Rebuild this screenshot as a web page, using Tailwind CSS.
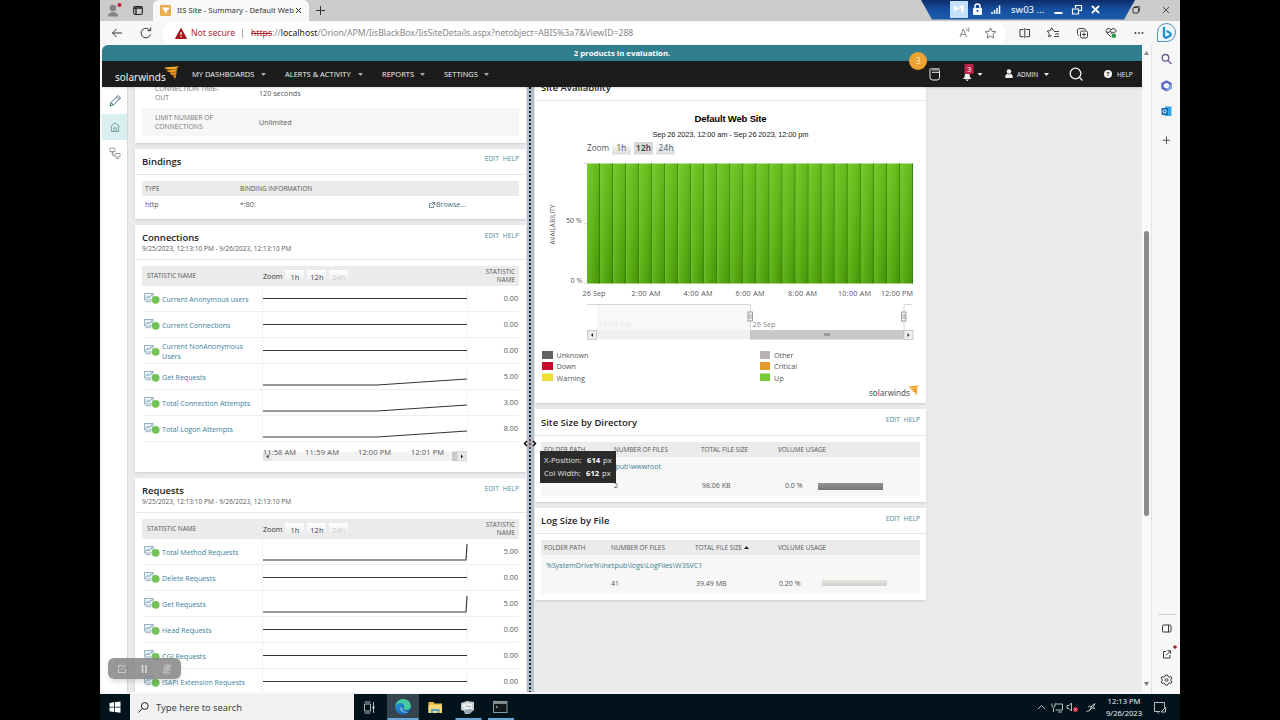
<!DOCTYPE html>
<html lang="en">
<head>
  <meta charset="UTF-8" />
  <meta name="viewport" content="width=device-width, initial-scale=1.0" />
  <title>IIS Site - Summary - Default Web Site</title>
  <script src="https://cdn.jsdelivr.net/npm/@tailwindcss/browser@4"></script>
</head>
<body class="w-[1280px] h-[720px] bg-black overflow-hidden flex justify-center font-['Open_Sans',sans-serif] text-[7px] text-[#555]">

<!-- Shared symbols -->
<svg class="hidden">
  <symbol id="bird" viewBox="0 0 16 15">
    <path d="M0 2.200C4 .3 9 1.600 15.500 0c-.6 1.600-1.600 2.600-3 3.200C8.500 4.600 4.500 4 0 2.200z" fill="#f4a62a"/>
    <path d="M2 4.300c4 .8 8.500 0 12.500-1.600-.8 2.400-2.200 3.800-4 4.300-3 .7-6-.2-8.500-2.700z" fill="#f39a1e"/>
    <path d="M5.500 7.300c3 .6 6-.2 8.300-1.800-.5 3-1.400 4.200-3 4.500-1.600.3-3.500-.8-5.300-2.700z" fill="#ef8d17"/>
    <path d="M9.200 11c1.500-.2 2.800-1 3.800-2.500.2 2-.3 3.600-1.800 6 .3-1.700-.4-2.800-2-3.500z" fill="#ee8a14"/>
  </symbol>
  <symbol id="stat" viewBox="0 0 16 13">
    <rect x=".6" y="1.500" width="8.500" height="6.500" fill="#eef5f9" stroke="#8fabbf" stroke-width=".9"/>
    <path d="M1.500 6.500l2-2 1.500 1L8.500 2.300" fill="none" stroke="#4b89a4" stroke-width=".9"/>
    <path d="M1.500 9.700h5.500" stroke="#9cb0bd"/>
    <circle cx="11.700" cy="7.800" r="3.900" fill="#74c257"/>
  </symbol>
</svg>

<div class="relative w-[1080px] h-[720px] flex flex-col bg-[#f7f7f7]">

  <!-- Browser tabs -->
  <div class="h-[21px] shrink-0 bg-[#cbcbca] flex items-center font-['Noto_Sans',sans-serif] text-[#333]">
    <svg class="w-[53px] h-[21px] shrink-0" viewBox="0 0 53 21">
      <circle cx="13" cy="8" r="3.200" fill="#858585"/><path d="M8 16.500c0-6 10-6 10 0z" fill="#858585"/>
      <circle cx="19.500" cy="5" r="2" fill="#c3202f"/>
      <rect x="33.700" y="6.500" width="8.600" height="8" rx="1.500" fill="none" stroke="#222" stroke-width="1.100"/><path d="M33.700 8h8.600M36 8v6" stroke="#222" stroke-width="1.300"/>
    </svg>
    <div class="w-[156px] h-full bg-[#f8f8f8] rounded-t-md flex items-center">
      <svg class="ml-[7px] w-[11px] h-[11px] shrink-0" viewBox="0 0 11 11"><rect width="11" height="11" rx="1" fill="#e8ad4e"/><path d="M2 2.500h7.500C9 5 7.500 5.500 6.500 6v3C5 8 4.500 6 2 2.500z" fill="#fff"/></svg>
      <span class="ml-[6px] w-[112px] whitespace-nowrap text-[7.7px]">IIS Site - Summary - Default Web</span>
      <svg class="ml-[6px] w-[7px] h-[7px]" viewBox="0 0 7 7"><path d="M1 1l5 5M6 1L1 6" stroke="#222"/></svg>
    </div>
    <svg class="ml-[6px] w-[11px] h-[11px]" viewBox="0 0 11 11"><path d="M5.500 1v9M1 5.500h9" stroke="#333"/></svg>
    <svg class="ml-auto w-[56px] h-[21px]" viewBox="0 0 56 21"><rect x="9" y="7.500" width="5.500" height="5.500" rx="1" fill="none" stroke="#333"/><path d="M10.500 6.500h5v5" fill="none" stroke="#333" stroke-width=".7"/><path d="M39 7l6 6M45 7l-6 6" stroke="#444" stroke-width=".9"/></svg>
  </div>

  <!-- Remote session bar -->
  <div class="absolute top-0 left-[820px] w-[216px] h-[20px]">
    <svg class="absolute inset-0 w-[216px] h-[20px]" viewBox="0 0 216 20">
      <defs><linearGradient id="rdp" x2="0" y2="1"><stop stop-color="#0d2d68"/><stop offset=".5" stop-color="#1650a0"/><stop offset="1" stop-color="#1b5cad"/></linearGradient></defs>
      <path d="M1 0h214l-11 19.500H12z" fill="url(#rdp)"/>
      <rect x="30" y="1" width="18" height="17" fill="#c3e2fa"/><path d="M35 6v5M35 8.500h4M42.500 5.500v7M43 9l-3-3" stroke="#fff" stroke-width="2.200" fill="none"/>
      <rect x="53" y="8" width="9" height="7" rx="1" fill="#fff"/><path d="M55 8V6.500a2.500 2.500 0 015 0V8" fill="none" stroke="#fff" stroke-width="1.500"/><circle cx="57.500" cy="11" r="1" fill="#1650a0"/>
      <path d="M72 14v-2M74.500 14v-4M77 14V8M79.500 14V5.500" stroke="#fff" stroke-width="1.500"/>
      <path d="M134.500 13h8" stroke="#fff" stroke-width="2"/>
      <path d="M152.500 9h6v5h-6zM155.500 8V5.500h6v5h-2.500" fill="none" stroke="#fff" stroke-width="1.200"/>
      <path d="M172 6l7 7M179 6l-7 7" stroke="#fff" stroke-width="1.800"/>
    </svg>
    <span class="absolute left-[91px] top-[3px] text-[9.6px] leading-[14px] text-white font-['Noto_Sans',sans-serif]">sw03 ...</span>
  </div>

  <!-- Address bar -->
  <div class="h-[24px] shrink-0 flex items-center font-['Noto_Sans',sans-serif] text-[8.7px]">
    <svg class="w-[62px] h-[24px] shrink-0" viewBox="0 0 62 24"><path d="M22 12H12.500m4-4l-4 4 4 4" fill="none" stroke="#333"/><path d="M50 9.500a4.800 4.800 0 10.500 4M50.700 6.500v3.200h-3.200" fill="none" stroke="#333"/></svg>
    <div class="w-[844px] h-[22px] bg-white rounded-full flex items-center whitespace-nowrap">
      <svg class="ml-[13px] w-[12px] h-[11px]" viewBox="0 0 12 11"><path d="M6 .5l5.500 10H.5z" fill="#a8141c" stroke="#a8141c" stroke-linejoin="round"/><path d="M6 4v3M6 8v1.200" stroke="#fff" stroke-width="1.200"/></svg>
      <span class="ml-[4px] w-[45px] pt-px text-[#b5242c]">Not secure</span>
      <span class="ml-[6px] h-[9px] w-px bg-[#aaa]"></span>
      <span class="ml-[8px] pt-px text-[#888] text-[8.66px]"><span class="text-[#b5242c] line-through">https</span>://<span class="text-[#222]">localhost</span>/Orion/APM/IisBlackBox/IisSiteDetails.aspx?netobject=ABIS%3a7&amp;ViewID=288</span>
      <svg class="ml-auto mr-[7px] w-[42px] h-[22px]" viewBox="0 0 42 22"><path d="M3 15l3.300-8 3.300 8M4.200 12.500h4.200M9.500 6.500q1.200 1.200 0 2.600M11.200 5.500q2 2.200 0 4.400" fill="none" stroke="#777" stroke-width=".9"/><path d="M33.500 6l1.600 3.400 3.700.4-2.800 2.500.8 3.700-3.300-1.900-3.300 1.900.8-3.700-2.800-2.500 3.700-.4z" fill="none" stroke="#666" stroke-width=".9"/></svg>
    </div>
    <svg class="w-[146px] h-[24px] shrink-0" viewBox="1006 21 146 24">
      <g fill="none" stroke="#333" stroke-width=".95">
        <path d="M1023.500 29.500h-3.500v7.200h3.500M1026 29.500h3.500v7.200h-3.500M1024.800 28v10.200"/>
        <path d="M1054 31.500h5M1055 34h4M1054 36.500h5M1053.500 31l-1.800-3.300-1.500 3-3.200.5 2.300 2.200-.6 3.400 3-1.500"/>
        <rect x="1080.500" y="31" width="7" height="7" rx="1.500"/><path d="M1084 32.500v4M1082 34.500h4M1079 35.500q-1.500-.5-1.500-2v-3q0-2 2-2h4q1.500 0 2 1.500"/>
        <path d="M1111 36.800l-4.300-4q-1.500-2.500.5-4 2-1 3.800 1 1.800-2 3.800-1 2 1.500.8 3.500M1107 32.300h2.400l1-1.700 1.500 3 1-1.300h2"/>
      </g>
      <circle cx="1113.800" cy="35.800" r="2.300" fill="#2d9a41"/>
      <circle cx="1135.500" cy="33" r=".9" fill="#333"/><circle cx="1139" cy="33" r=".9" fill="#333"/><circle cx="1142.500" cy="33" r=".9" fill="#333"/>
    </svg>
  </div>

  <div class="flex h-[649px] shrink-0 pl-[2px]">
    <!-- Orion page -->
    <div class="w-[1040px] h-[647px] flex flex-col rounded-tl-md overflow-hidden bg-[#ebebed]">
      <div class="h-[16px] shrink-0 pt-px bg-[#307e90] text-white font-bold text-[7.8px] flex items-center justify-center">2 products in evaluation.</div>

      <nav class="h-[26px] shrink-0 bg-[#1c1c1c] text-[#f3f3f3] text-[7.5px] flex items-center whitespace-nowrap relative shadow">
        <span class="ml-[13px] w-[50px] pt-[5px] text-[10px] leading-none font-['Noto_Sans',sans-serif]">solarwinds</span>
        <svg class="w-[15px] h-[14px] mb-[3px] -ml-px"><use href="#bird"/></svg>
        <span class="ml-[13px] pt-px w-[65px]">MY DASHBOARDS</span><svg class="ml-[4px] w-[5px] h-[3px]" viewBox="0 0 5 3"><path d="M0 0h5L2.500 3z" fill="#aaa"/></svg>
        <span class="ml-[19px] pt-px w-[69px]">ALERTS &amp; ACTIVITY</span><svg class="ml-[4px] w-[5px] h-[3px]" viewBox="0 0 5 3"><path d="M0 0h5L2.500 3z" fill="#aaa"/></svg>
        <span class="ml-[19px] pt-px w-[34px]">REPORTS</span><svg class="ml-[4px] w-[5px] h-[3px]" viewBox="0 0 5 3"><path d="M0 0h5L2.500 3z" fill="#aaa"/></svg>
        <span class="ml-[19px] pt-px w-[36px]">SETTINGS</span><svg class="ml-[4px] w-[5px] h-[3px]" viewBox="0 0 5 3"><path d="M0 0h5L2.500 3z" fill="#aaa"/></svg>
        <svg class="ml-auto w-[92px] h-[26px] shrink-0" viewBox="924 61 92 26">
          <path d="M930 68.500v9q0 2.500 2.500 2.500h4.500q2.500 0 2.500-2.500v-7" fill="none" stroke="#eee"/><path d="M930.500 68h8.500q.8 0 .8 1v1.500h-8z" fill="#999"/><path d="M932 72.300h8" stroke="#eee"/>
          <path d="M963 79q2-1.500 2-5h4.500q0 3.500 2 5zM965.500 79.500h3.500l-1.700 1.800z" fill="#eee"/><rect x="964.500" y="64" width="9" height="10" rx="1" fill="#bf2547"/>
          <text x="967" y="72" font-size="7.500" fill="#fff">3</text>
          <path d="M977.500 73h5l-2.500 3z" fill="#eee"/>
          <circle cx="1009" cy="71.500" r="2.300" fill="#eee"/><path d="M1005.300 78v-2q1-2.200 2.500-2.200l1.200 1 1.200-1q1.700 0 2.500 2.200v2z" fill="#eee"/>
        </svg>
        <span class="ml-px pt-px w-[23px] text-[6.4px]">ADMIN</span><svg class="ml-[4px] w-[5px] h-[3px]" viewBox="0 0 5 3"><path d="M0 0h5L2.500 3z" fill="#eee"/></svg>
        <svg class="ml-[20px] w-[14px] h-[14px]" viewBox="0 0 14 14"><circle cx="6.500" cy="6.500" r="5.300" fill="none" stroke="#f2f2f2" stroke-width="1.300"/><path d="M10.500 10.500l3 3" stroke="#f2f2f2" stroke-width="1.300"/></svg>
        <svg class="ml-[21px] w-[8px] h-[8px]" viewBox="0 0 8 8"><circle cx="4" cy="4" r="4" fill="#f2f2f2"/><text x="2.400" y="6.300" font-size="6" font-weight="bold" fill="#222">?</text></svg>
        <span class="ml-[5px] pt-px w-[25px] text-[6.5px]">HELP</span>
      </nav>

      <div class="flex h-[605px] overflow-hidden">
        <!-- Icon rail -->
        <div class="w-[26px] shrink-0 bg-white border-r border-[#d8d8d8] flex flex-col">
          <div class="h-[27px] flex items-center justify-center"><svg class="w-[14px] h-[14px]" viewBox="0 0 14 14" fill="none" stroke="#3f7080"><path d="M2 12l1-3.500L10 1.500l2.500 2.500-7 7zM8.500 3L11 5.500M3 8.500L5.500 11"/></svg></div>
          <div class="h-[26px] bg-[#d9eff0] flex items-center justify-center"><svg class="w-[10px] h-[10px]" viewBox="0 0 10 10" fill="none" stroke="#71959c" stroke-width=".9"><path d="M.5 4.700L5 1l4.500 3.700M1.500 4.500v5h7v-5M3.800 9.500V5.800h2.400v3.700"/></svg></div>
          <div class="h-[26px] flex items-center justify-center"><svg class="w-[12px] h-[12px]" viewBox="0 0 12 12" fill="none" stroke="#999" stroke-width=".9"><path d="M1 1h5v3.500H1zM6 6.500h5V10H6zM3.500 4.500v4H6M2 6h3M7 11.500h3"/></svg></div>
        </div>

        <!-- Left column -->
        <div class="w-[391px] ml-[7px] shrink-0 flex flex-col gap-[6px]">
          <div class="h-[56px] shrink-0 bg-white shadow px-[7px] text-[7.2px] leading-[9px] text-[#777]">
            <div class="-mt-[2px] h-[23px] flex items-start pl-[13px]"><div class="w-[104px] -mt-[1px] text-[6.8px]">CONNECTION TIME-<br>OUT</div><div class="pt-[4px] text-[#555]">120 seconds</div></div>
            <div class="h-[28px] bg-[#f6f6f6] flex items-center pl-[13px]"><div class="w-[104px] text-[6.8px]">LIMIT NUMBER OF<br>CONNECTIONS</div><div class="text-[#555]">Unlimited</div></div>
          </div>

          <div class="h-[70px] shrink-0 bg-white shadow">
            <div class="h-[26px] border-b border-[#e6e6e6] flex px-[7px]"><h2 class="pt-[6px] text-[9.5px] leading-[14px] font-semibold text-[#222]">Bindings</h2><div class="ml-auto pt-[5px] flex gap-[4px] text-[6.7px] leading-[10px] text-[#4d8a9c]"><span>EDIT</span><span>HELP</span></div></div>
            <div class="mx-[7px] mt-[6px] h-[15px] bg-[#ebebeb] flex items-center pl-[3px] text-[6.4px]"><span class="w-[95px]">TYPE</span><span>BINDING INFORMATION</span></div>
            <div class="mx-[7px] h-[17px] pt-px flex items-center pl-[3px]"><span class="w-[95px]">http</span><span class="w-[189px]">*:80:</span>
              <svg class="w-[6px] h-[6px] mr-px" viewBox="0 0 6 6" fill="none" stroke="#4d7483" stroke-width=".8"><path d="M2.500 1.500h-2v4h4v-2M3 .5h2.500V3M5.500.5L2.500 3.500"/></svg><span class="text-[#446a78]">Browse...</span></div>
          </div>

          <div class="h-[247px] shrink-0 bg-white shadow">
            <div class="h-[35px] border-b border-[#e6e6e6] flex px-[7px]"><div><h2 class="pt-[7px] text-[9.5px] leading-[12px] font-semibold text-[#222]">Connections</h2><p class="text-[6.55px] leading-[9px]">9/25/2023, 12:13:10 PM - 9/26/2023, 12:13:10 PM</p></div><div class="ml-auto pt-[6px] flex gap-[4px] text-[6.7px] leading-[10px] text-[#4d8a9c]"><span>EDIT</span><span>HELP</span></div></div>
            <div class="mx-[7px] mt-[6px] h-[20px] bg-[#ebebeb] flex items-center pl-[5px] text-[6.4px]">
              <span class="w-[116px]">STATISTIC NAME</span><span class="text-[7.2px] text-[#333]">Zoom</span>
              <div class="ml-[3px] flex gap-[3px] text-[7.5px] text-[#444]"><span class="w-[19px] h-[13px] text-center leading-[14px] bg-linear-to-b from-white to-[#e9e9e9]">1h</span><span class="w-[19px] h-[13px] text-center leading-[14px] bg-linear-to-b from-white to-[#e9e9e9]">12h</span><span class="w-[19px] h-[13px] text-center leading-[14px] bg-linear-to-b from-white to-[#e9e9e9] text-[#ccc]">24h</span></div>
              <span class="ml-auto mr-[4px] text-right leading-[8px]">STATISTIC<br>NAME</span>
            </div>
            <div id="connections" class="mx-[7px]"></div>
            <svg class="ml-[127px] mt-[6px] w-[206px] h-[14px]" viewBox="262 448 206 14">
              <rect x="263" y="451.500" width="203" height="9.500" fill="#f3f3f3"/>
              <rect x="263" y="451.500" width="9" height="9.500" fill="#e4e4e4"/><path d="M268.500 454.500v4l-2-2z" fill="#222"/>
              <rect x="452" y="451.500" width="5" height="9.500" fill="#c9c9c9"/><rect x="457" y="451.500" width="9.500" height="9.500" fill="#e4e4e4" stroke="#ccc" stroke-width=".5"/><path d="M461 454.500v4l2-2z" fill="#222"/>
              <g font-size="7.500" fill="#555"><text x="263" y="455" textLength="33">11:58 AM</text><text x="305" y="455" textLength="34">11:59 AM</text><text x="358" y="455" textLength="33">12:00 PM</text><text x="411" y="455" textLength="33">12:01 PM</text></g>
            </svg>
          </div>

          <div class="h-[247px] shrink-0 bg-white shadow">
            <div class="h-[35px] border-b border-[#e6e6e6] flex px-[7px]"><div><h2 class="pt-[7px] text-[9.5px] leading-[12px] font-semibold text-[#222]">Requests</h2><p class="text-[6.55px] leading-[9px]">9/25/2023, 12:13:10 PM - 9/26/2023, 12:13:10 PM</p></div><div class="ml-auto pt-[6px] flex gap-[4px] text-[6.7px] leading-[10px] text-[#4d8a9c]"><span>EDIT</span><span>HELP</span></div></div>
            <div class="mx-[7px] mt-[6px] h-[20px] bg-[#ebebeb] flex items-center pl-[5px] text-[6.4px]">
              <span class="w-[116px]">STATISTIC NAME</span><span class="text-[7.2px] text-[#333]">Zoom</span>
              <div class="ml-[3px] flex gap-[3px] text-[7.5px] text-[#444]"><span class="w-[19px] h-[13px] text-center leading-[14px] bg-linear-to-b from-white to-[#e9e9e9]">1h</span><span class="w-[19px] h-[13px] text-center leading-[14px] bg-linear-to-b from-white to-[#e9e9e9]">12h</span><span class="w-[19px] h-[13px] text-center leading-[14px] bg-linear-to-b from-white to-[#e9e9e9] text-[#ccc]">24h</span></div>
              <span class="ml-auto mr-[4px] text-right leading-[8px]">STATISTIC<br>NAME</span>
            </div>
            <div id="requests" class="mx-[7px]"></div>
          </div>
        </div>

        <!-- Column resizer -->
        <div class="w-[7px] ml-px mr-px shrink-0 bg-[#b4c1cb] flex justify-center"><div class="w-[2px] h-full mr-px bg-[repeating-linear-gradient(#17222e_0_2.5px,#b4c1cb_2.5px_4px)]"></div></div>

        <!-- Right column -->
        <div class="w-[391px] shrink-0 flex flex-col gap-[6px]">
          <div class="h-[316px] shrink-0 bg-white shadow overflow-hidden">
            <div class="h-[14px] border-b border-[#e6e6e6] pl-[6px] flex items-start"><h2 class="-mt-[6px] text-[9.5px] leading-[14px] font-semibold text-[#222]">Site Availability</h2></div>
            <svg class="w-[391px] h-[302px]" viewBox="535 101 391 302">
              <defs><linearGradient id="up" x2="1" y2="1"><stop stop-color="#76cb2c"/><stop offset=".5" stop-color="#60b51a"/><stop offset="1" stop-color="#459006"/></linearGradient>
              <linearGradient id="btn" x2="0" y2="1"><stop stop-color="#fff"/><stop offset="1" stop-color="#dcdcdc"/></linearGradient></defs>
              <g font-family="Liberation Sans" fill="#000"><text x="694.500" y="121.500" font-size="9.500" font-weight="bold" textLength="72">Default Web Site</text><text x="652.500" y="137" font-size="7.500" fill="#222" textLength="156">Sep 26 2023, 12:00 am - Sep 26 2023, 12:00 pm</text></g>
              <rect x="612" y="142" width="19" height="12.500" fill="url(#btn)"/><rect x="634" y="142" width="19" height="12.500" fill="#d8d8d8"/><rect x="656" y="142" width="19" height="12.500" fill="url(#btn)"/>
              <g font-size="8.200" fill="#555"><text x="587" y="151" textLength="22">Zoom</text><text x="616.500" y="151">1h</text><text x="636" y="151" font-weight="600" fill="#333" textLength="15">12h</text><text x="658.500" y="151" fill="#3d5c70" textLength="15">24h</text></g>
              <path d="M584 163.500h4M584 223.500h4M584 283.500h4" stroke="#ccc" stroke-width=".7"/>
              <g id="bars"></g>
              <g font-size="7.200" fill="#555">
                <text transform="translate(555 244.500) rotate(-90)" font-size="6.500" textLength="40">AVAILABILITY</text>
                <text x="566" y="222.500" textLength="16">50 %</text><text x="570.500" y="282.500" textLength="12">0 %</text>
                <text x="582.500" y="295.500" textLength="23">26 Sep</text><text x="631.500" y="295.500" textLength="29">2:00 AM</text><text x="683.500" y="295.500" textLength="29">4:00 AM</text><text x="735.500" y="295.500" textLength="29">6:00 AM</text><text x="788" y="295.500" textLength="29">8:00 AM</text><text x="838" y="295.500" textLength="33">10:00 AM</text><text x="881" y="295.500" textLength="32">12:00 PM</text>
              </g>
              <path d="M587 304.500h163.500v26M904 330v-25.500h8" fill="none" stroke="#ccc" stroke-width=".8"/><rect x="597" y="305" width="153" height="25" fill="#f8f8f8"/>
              <text x="599" y="327" font-size="7" fill="#e8e8e8" textLength="32">12:00 AM</text><text x="752.500" y="327" font-size="7.200" fill="#888" textLength="23">26 Sep</text>
              <rect x="587" y="330" width="326" height="9.500" fill="#f0f0f0"/><rect x="750" y="330" width="154" height="9.500" fill="#c8c8c8"/>
              <path d="M825 333v3M827 333v3M829 333v3" stroke="#666" stroke-width=".9"/>
              <g fill="#eee" stroke="#bbb" stroke-width=".7"><rect x="587.400" y="330.400" width="9" height="9"/><rect x="904" y="330.400" width="9" height="9"/></g>
              <path d="M593 333v4l-2-2zM907.500 333v4l2-2z" fill="#222"/>
              <g fill="#f5f5f5" stroke="#888" stroke-width=".8"><rect x="748" y="312" width="4.500" height="9"/><rect x="901.500" y="312" width="4.500" height="9"/></g><path d="M749.600 314v5M751 314v5M903.200 314v5M904.600 314v5" stroke="#888" stroke-width=".6"/>
              <rect x="542" y="351" width="11" height="8" fill="#606264"/><rect x="542" y="362" width="11" height="8" fill="#c8092f"/><rect x="542" y="373.500" width="11" height="7.500" fill="#f0df30"/>
              <rect x="760" y="351" width="10" height="8" fill="#b7b3b5"/><rect x="760" y="362" width="10" height="8" fill="#e59a2b"/><rect x="760" y="373.500" width="10" height="7.500" fill="#77c935"/>
              <g font-size="7.200" fill="#555"><text x="556.500" y="358" textLength="32">Unknown</text><text x="556.500" y="369" textLength="19.500">Down</text><text x="556.500" y="380.500" textLength="28.500">Warning</text><text x="774" y="358" textLength="19.500">Other</text><text x="774" y="369" textLength="23">Critical</text><text x="774" y="380.500" textLength="10">Up</text></g>
              <text x="869" y="396" font-size="8.200" fill="#555" font-family="Noto Sans" textLength="41">solarwinds</text><use href="#bird" x="908" y="385" width="11" height="11"/>
            </svg>
          </div>

          <div class="h-[93px] shrink-0 bg-white shadow">
            <div class="h-[27px] border-b border-[#e6e6e6] flex px-[6px]"><h2 class="pt-[7px] text-[9.5px] leading-[14px] font-semibold text-[#222]">Site Size by Directory</h2><div class="ml-auto pt-[6px] flex gap-[4px] text-[6.7px] leading-[10px] text-[#4d8a9c]"><span>EDIT</span><span>HELP</span></div></div>
            <div class="mx-[6px] mt-[6px] h-[15px] bg-[#ebebeb] flex items-center pl-[3px] text-[6.4px]"><span class="w-[70px]">FOLDER PATH</span><span class="w-[87px]">NUMBER OF FILES</span><span class="w-[77px]">TOTAL FILE SIZE</span><span>VOLUME USAGE</span></div>
            <div class="mx-[6px] h-[39px] bg-[#f7f7f7]">
              <div class="h-[20px] pl-[5px] flex items-center text-[#3b7f92]"><span class="w-[115px] whitespace-nowrap flex justify-end">%SystemDrive%\inetpub\wwwroot</span></div>
              <div class="h-[19px] pl-[73px] flex items-center"><span class="w-[88px]">2</span><span class="w-[83px]">98.06 KB</span><span class="w-[33px]">0.0 %</span><span class="w-[65px] h-[7px] bg-linear-to-b from-[#949494] to-[#777]"></span></div>
            </div>
          </div>

          <div class="h-[92px] shrink-0 bg-white shadow">
            <div class="h-[26px] border-b border-[#e6e6e6] flex px-[6px]"><h2 class="pt-[6px] text-[9.5px] leading-[14px] font-semibold text-[#222]">Log Size by File</h2><div class="ml-auto pt-[6px] flex gap-[4px] text-[6.7px] leading-[10px] text-[#4d8a9c]"><span>EDIT</span><span>HELP</span></div></div>
            <div class="mx-[6px] mt-[6px] h-[15px] bg-[#ebebeb] flex items-center pl-[3px] text-[6.4px]"><span class="w-[67px]">FOLDER PATH</span><span class="w-[84px]">NUMBER OF FILES</span><span class="w-[49px]">TOTAL FILE SIZE</span><svg class="w-[5px] h-[3px] mr-[29px]" viewBox="0 0 5 3"><path d="M0 3h5L2.500 0z" fill="#222"/></svg><span>VOLUME USAGE</span></div>
            <div class="mx-[6px] h-[39px] bg-[#f7f7f7]">
              <div class="h-[19px] pt-px pl-[5px] flex items-center text-[7.12px] text-[#3b7f92]"><span>%SystemDrive%\inetpub\logs\LogFiles\W3SVC1</span></div>
              <div class="h-[20px] pl-[70px] flex items-center"><span class="w-[85px]">41</span><span class="w-[83px]">39.49 MB</span><span class="w-[43px]">0.20 %</span><span class="w-[65px] h-[6px] mb-[2px] bg-linear-to-b from-[#e3e3df] to-[#d2d2cc]"></span></div>
            </div>
          </div>
        </div>
      </div>
    </div>

    <!-- Page scrollbar -->
    <div class="w-[10px] h-full bg-[#f8f8f8] border-r border-[#e3e3e3] flex flex-col items-center">
      <svg class="mt-[6px] w-[5px] h-[4px]" viewBox="0 0 5 4"><path d="M0 4h5L2.500 0z" fill="#888"/></svg>
      <div class="mt-[176px] w-[5px] h-[285px] rounded-full bg-[#8b8b8b]"></div>
      <svg class="mt-auto mb-[8px] w-[5px] h-[4px]" viewBox="0 0 5 4"><path d="M0 0h5L2.500 4z" fill="#777"/></svg>
    </div>

    <!-- Edge sidebar -->
    <svg class="w-[28px] h-[649px]" viewBox="1152 45 28 649" fill="none">
      <circle cx="1165.500" cy="57.800" r="3.300" stroke="#6d5a8c" stroke-width="1.300"/><path d="M1168 60.500l3.500 3.500" stroke="#7a5fa5" stroke-width="1.500"/>
      <path d="M1166.500 81.500l4 2.200v4l-4 2.300-4-2.300v-4z" stroke="#5b63c4" stroke-width="2.400"/><path d="M1166.500 90l4-2.300v-3" stroke="#7faae8" stroke-width="2"/>
      <rect x="1165" y="106.500" width="6.500" height="9.500" fill="#35a5e6"/><rect x="1161.500" y="108" width="6.500" height="7" rx=".7" fill="#0f6cb5"/><circle cx="1164.700" cy="111.500" r="1.600" stroke="#fff"/>
      <path d="M1166.500 136.500v7.500M1162.700 140.200h7.500" stroke="#444" stroke-width=".9"/>
      <path d="M1158 614.500h18" stroke="#d5d5d5"/>
      <rect x="1162.500" y="625" width="8.500" height="7" rx="1.200" stroke="#333"/><path d="M1168.500 625v7" stroke="#333"/>
      <path d="M1166 651.500h-2.500v6.500h6.500v-3M1167.500 650.800h3v3M1170.500 650.800l-4.500 4.500" stroke="#333" stroke-width=".95"/><circle cx="1175" cy="647" r="1.800" fill="#9c1f2e"/>
      <path d="M1165.500 675h2l.5 1.500 1.500.6 1.500-.5 1 1.700-1.200 1v1.500l1.200 1-1 1.700-1.500-.5-1.500.7-.5 1.400h-2l-.5-1.400-1.500-.7-1.500.5-1-1.700 1.200-1v-1.500l-1.200-1 1-1.700 1.500.5 1.500-.6z" stroke="#333" stroke-width=".95"/><circle cx="1166.500" cy="680" r="1.400" stroke="#333" stroke-width=".9"/>
    </svg>
  </div>

  <!-- Bing button -->
  <svg class="absolute left-[1056px] top-[22px] w-[22px] h-[22px]" viewBox="0 0 22 22"><path d="M1.500 19.500V10.500a9 9 0 119 9z" fill="#eef7fc" stroke="#558fb4"/><path d="M8 5v9.500l2 1.500 4.500-2.500c1-2.800-1.500-3.500-4-4.500" fill="none" stroke="#2290cf" stroke-width="2.300"/></svg>

  <!-- Notification count -->
  <div class="absolute left-[809px] top-[52px] w-[18px] h-[18px] rounded-full bg-[#eda232] text-[#fbe9c8] text-[9px] flex items-center justify-center">3</div>

  <!-- Resize tooltip and cursor -->
  <svg class="absolute left-[423px] top-[438px] w-[14px] h-[11px]" viewBox="0 0 14 11"><path d="M7 0v11" stroke="#a88" stroke-width="3" opacity=".5"/><path d="M4 3L1.500 5.500 4 8M10 3l2.500 2.500L10 8" fill="none" stroke="#111" stroke-width="1.500"/></svg>
  <div class="absolute left-[440px] top-[451px] w-[76px] h-[32px] bg-[#2b2b2b] text-[#e4e4e4] text-[7.7px] leading-[13px] px-[4px] pt-[3px] whitespace-nowrap">
    <div class="flex"><span class="w-[43px]">X-Position:</span><b class="w-[16px] text-white">614</b>px</div>
    <div class="flex"><span class="w-[42px]">Col Width:</span><b class="w-[16px] text-white">612</b>px</div>
  </div>

  <!-- Recorder controls -->
  <div class="absolute left-[8px] top-[658px] w-[73px] h-[21px] rounded-md bg-[#858585]/85 shadow-md flex items-center justify-around px-[2px]">
    <svg class="w-[10px] h-[10px]" viewBox="0 0 10 10" fill="none" stroke="#ccc"><path d="M6 1.500H1.500v7h7V5M4 6l5-5"/></svg>
    <svg class="w-[8px] h-[8px]" viewBox="0 0 8 8"><path d="M2.500 0v8M6 0v8" stroke="#ddd" stroke-width="1.500"/></svg>
    <svg class="w-[10px] h-[10px]" viewBox="0 0 10 10" fill="none" stroke="#ccc"><circle cx="5" cy="4" r="3"/><circle cx="5" cy="4" r="1"/><path d="M2 9h6M1 9l8-8.500"/></svg>
  </div>

  <!-- Taskbar -->
  <div class="h-[26px] shrink-0 bg-[#03131c] flex items-center text-[#e8eef0] font-['Noto_Sans',sans-serif]">
    <svg class="w-[30px] h-[26px] shrink-0" viewBox="0 0 30 26"><path d="M9.500 9l4.500-.7v4.400H9.500zM14.800 8.200l5.700-.8v5.300h-5.700zM9.500 13.500H14v4.400l-4.500-.7zM14.800 13.500h5.700v5.300l-5.700-.8z" fill="#fff"/></svg>
    <div class="w-[224px] h-full pt-[2px] bg-[#f2f2f2] flex items-center text-[9.35px] text-[#444]">
      <svg class="ml-[8px] mr-[7px] mb-[2px] w-[11px] h-[11px]" viewBox="0 0 11 11" fill="none" stroke="#222"><circle cx="6.800" cy="4" r="3.400"/><path d="M4.300 6.500L.5 10.500"/></svg>Type here to search
    </div>
    <svg class="w-[166px] h-[26px] shrink-0" viewBox="354 694 166 26">
      <defs><linearGradient id="edge" x2="1" y2="1"><stop stop-color="#2a9fe0"/><stop offset="1" stop-color="#0b4fa8"/></linearGradient></defs>
      <path d="M364.500 704h6v7h-6zM364.500 702h6M364.500 713h6M373.500 702v11" fill="none" stroke="#aeb8bd"/><path d="M372.500 706.500h2v2h-2z" fill="#ddd"/>
      <rect x="387" y="694" width="32" height="26" fill="#36444e"/><path d="M387.500 719h31M455.500 719h26M488 719h26" stroke="#6ba7d6" stroke-width="2"/>
      <circle cx="403" cy="707" r="7.800" fill="url(#edge)"/><path d="M395.500 705q2-6 7.500-6 7 0 7.800 7 .2 3.500-4 4-3 .2-3.300-1.500 1.600-2.500-.5-4.500-3-2.300-7.500 1z" fill="#49c9a0"/><path d="M399.500 708q.5 4 5 5 2.500.4 4.500-1.200-3 .4-5.400-1-2-1.500-1.300-4.300z" fill="#b9e3f5" opacity=".5"/>
      <path d="M428.500 702h5l1 1.500h7.500v9.500h-13.500z" fill="#e9bd4a"/><path d="M428.500 705h13.500v8h-13.500z" fill="#f7da7b"/><path d="M431 709h8.500v4H431z" fill="#5c9fc4"/><path d="M433 711h4.500v2H433z" fill="#f7da7b"/>
      <path d="M461 703l6-2 7 1v8l-5 4h-4l-1-3-3-1z" fill="#c7ced2"/><path d="M462.500 704.500l5-1.500 4.500 1v4.500l-4 1-5-1z" fill="#eef1f2"/><path d="M465 710l6-1 1.500 2-4 3-3.500-1z" fill="#9caab2"/><path d="M466 705l2 2 3-1" fill="none" stroke="#7b8b94" stroke-width=".8"/>
      <rect x="493.500" y="701.500" width="13.500" height="11" fill="#14181b" stroke="#8b989f"/><path d="M494 703h12.500" stroke="#bac4c9" stroke-width="1.300"/><path d="M496 706l1.500 1-1.500 1" fill="none" stroke="#ddd" stroke-width=".7"/>
    </svg>
    <svg class="ml-auto w-[62px] h-[26px] shrink-0" viewBox="1036 694 62 26" fill="none" stroke="#c9d2d6" stroke-width=".9">
      <path d="M1038 709l3.500-3.500 3.500 3.500M1055 704h7.500v6h-7M1058 712h4M1052 703.500v3q1.500 1.500 3 0v-3M1053.500 708v4M1067 705.500h2l2.500-2.500v8l-2.500-2.500h-2z"/><circle cx="1075.500" cy="709.500" r="2.500" fill="#d42a45" stroke="none"/><path d="M1074.500 708.500l2 2m0-2l-2 2" stroke="#fff" stroke-width=".6"/>
      <path d="M1086.500 711.500q3.500 0 4-3t4.500-5q-1.500 5-5.500 6.500M1088 707q2-2 3.500 0t3.500 1"/>
    </svg>
    <div class="w-[52px] text-[7.6px] leading-[12px] text-center whitespace-nowrap">12:13 PM<br>9/26/2023</div>
    <svg class="w-[30px] h-[26px]" viewBox="1150 694 30 26" fill="none" stroke="#c9d2d6" stroke-width=".9"><path d="M1160 711.500h-5.500v-9h10v5M1157 711.500l2 2M1161 712l4.500-4.500v4.500z"/></svg>
  </div>
</div>

<script>
// [name, value, sparkline points in a 204x26 box]
const flat = "0,12.5 204,12.5";
const ramp = "0,21 114,21 204,15";
const spike = "0,21 203,21 204,5";
const connections = [
  ["Current Anonymous users", "0.00", flat],
  ["Current Connections", "0.00", flat],
  ["Current NonAnonymous Users", "0.00", flat],
  ["Get Requests", "5.00", ramp],
  ["Total Connection Attempts", "3.00", ramp],
  ["Total Logon Attempts", "8.00", ramp]
];
const requests = [
  ["Total Method Requests", "5.00", spike],
  ["Delete Requests", "0.00", flat],
  ["Get Requests", "5.00", spike],
  ["Head Requests", "0.00", flat],
  ["CGI Requests", "0.00", flat],
  ["ISAPI Extension Requests", "0.00", flat]
];

function renderRows(id, rows) {
  document.getElementById(id).innerHTML = rows.map(r => `
    <div class="h-[26px] ml-[2px] border-b border-[#eeeeee] flex items-center">
      <svg class="w-[16px] h-[13px] shrink-0"><use href="#stat"/></svg>
      <span class="ml-[2px] w-[96px] pr-[6px] text-[7.1px] text-[#3b7f9d] leading-[10px]">${r[0]}</span>
      <svg class="ml-[5px] w-[204px] h-[26px] shrink-0 overflow-visible" viewBox="0 0 204 26"><path d="M-.5 0v24M204 4v18" stroke="#f0f0f0"/><polyline points="${r[2]}" fill="none" stroke="#333" stroke-width="1.1"/></svg>
      <span class="ml-auto mr-px text-[7.2px]">${r[1]}</span>
    </div>`).join("");
}

function renderBars() {
  let out = "";
  for (let i = 0; i < 25; i++) {
    const x = 587 + i * 13.04;
    out += `<rect x="${x}" y="163.5" width="13.04" height="120" fill="url(#up)"/><path d="M${x + 12.6} 163.5v120" stroke="#347a05" stroke-width=".9"/>`;
  }
  document.getElementById("bars").innerHTML = out;
}

renderRows("connections", connections);
renderRows("requests", requests);
renderBars();
</script>
</body>
</html>
